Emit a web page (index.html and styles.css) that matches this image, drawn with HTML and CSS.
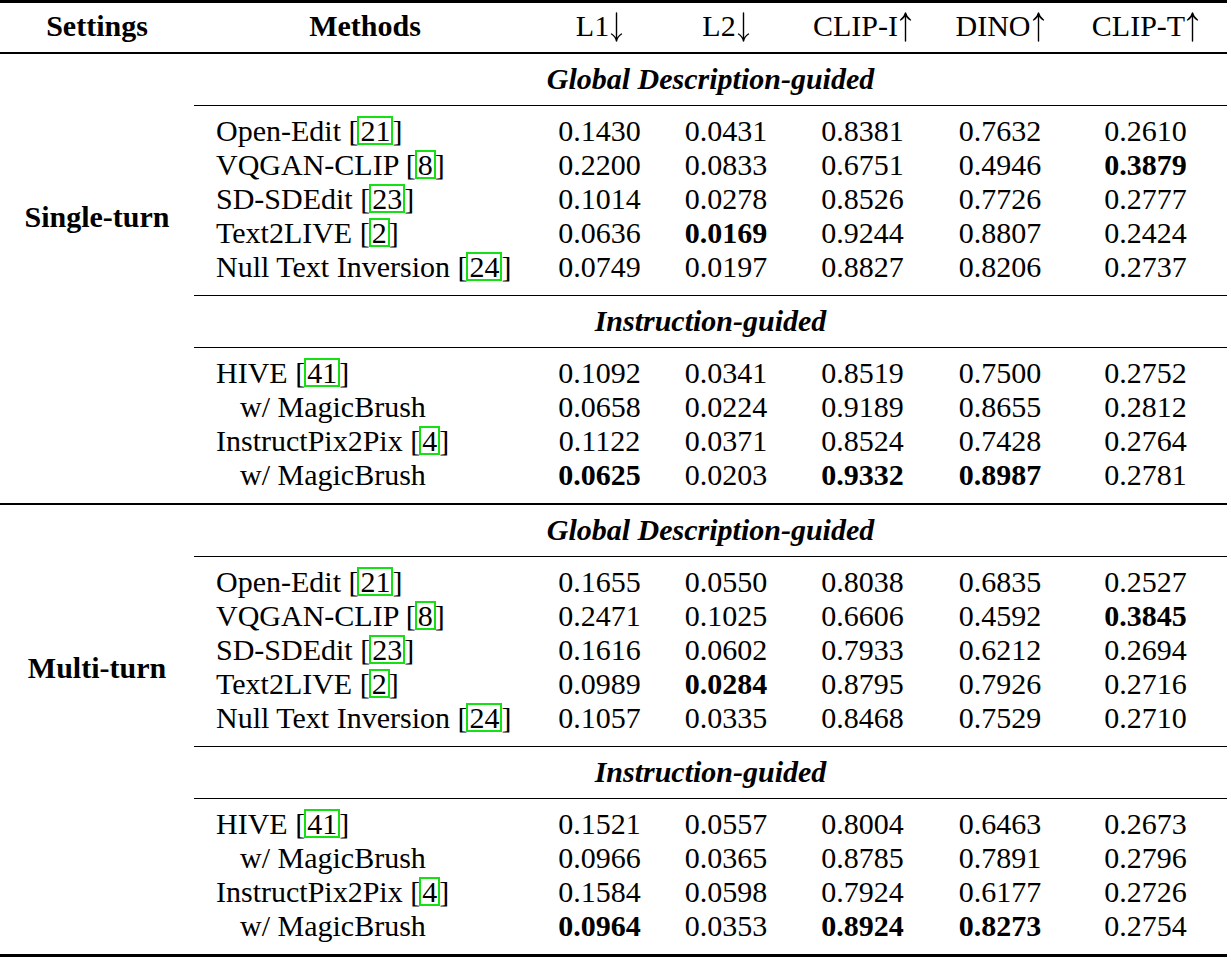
FILE: index.html
```html
<!DOCTYPE html>
<html lang="en">
<head>
<meta charset="utf-8">
<title>Results table</title>
<link rel="stylesheet" href="styles.css">
</head>
<body>
<div class="table">
  <div class="rule rule-thick"></div>
  <div class="head">
    <div class="hc b">Settings</div>
    <div class="hc b">Methods</div>
    <div class="hc">L1<svg class="arr" viewBox="0 0 12 30" aria-label="↓"><path d="M6 1V29M1 22Q5 24.5 6 29Q7 24.5 11 22"/></svg></div>
    <div class="hc">L2<svg class="arr" viewBox="0 0 12 30" aria-label="↓"><path d="M6 1V29M1 22Q5 24.5 6 29Q7 24.5 11 22"/></svg></div>
    <div class="hc">CLIP-I<svg class="arr" viewBox="0 0 12 30" aria-label="↑"><path d="M6 29V1M1 8Q5 5.5 6 1Q7 5.5 11 8"/></svg></div>
    <div class="hc">DINO<svg class="arr" viewBox="0 0 12 30" aria-label="↑"><path d="M6 29V1M1 8Q5 5.5 6 1Q7 5.5 11 8"/></svg></div>
    <div class="hc">CLIP-T<svg class="arr" viewBox="0 0 12 30" aria-label="↑"><path d="M6 29V1M1 8Q5 5.5 6 1Q7 5.5 11 8"/></svg></div>
  </div>
  <div class="rule rule-head"></div>

  <section class="block">
    <div class="setting">Single-turn</div>
    <div class="body">
      <div class="group-title">Global Description-guided</div>
      <div class="rule rule-thin"></div>
      <div class="rows rows-5">
        <div class="row"><div class="m">Open-Edit [<span class="cite">21</span>]</div><div class="n">0.1430</div><div class="n">0.0431</div><div class="n">0.8381</div><div class="n">0.7632</div><div class="n">0.2610</div></div>
        <div class="row"><div class="m">VQGAN-CLIP [<span class="cite">8</span>]</div><div class="n">0.2200</div><div class="n">0.0833</div><div class="n">0.6751</div><div class="n">0.4946</div><div class="n b">0.3879</div></div>
        <div class="row"><div class="m">SD-SDEdit [<span class="cite">23</span>]</div><div class="n">0.1014</div><div class="n">0.0278</div><div class="n">0.8526</div><div class="n">0.7726</div><div class="n">0.2777</div></div>
        <div class="row"><div class="m">Text2LIVE [<span class="cite">2</span>]</div><div class="n">0.0636</div><div class="n b">0.0169</div><div class="n">0.9244</div><div class="n">0.8807</div><div class="n">0.2424</div></div>
        <div class="row"><div class="m">Null Text Inversion [<span class="cite">24</span>]</div><div class="n">0.0749</div><div class="n">0.0197</div><div class="n">0.8827</div><div class="n">0.8206</div><div class="n">0.2737</div></div>
      </div>
      <div class="rule rule-thin"></div>
      <div class="group-title">Instruction-guided</div>
      <div class="rule rule-thin"></div>
      <div class="rows">
        <div class="row"><div class="m">HIVE [<span class="cite">41</span>]</div><div class="n">0.1092</div><div class="n">0.0341</div><div class="n">0.8519</div><div class="n">0.7500</div><div class="n">0.2752</div></div>
        <div class="row"><div class="m ind">w/ MagicBrush</div><div class="n">0.0658</div><div class="n">0.0224</div><div class="n">0.9189</div><div class="n">0.8655</div><div class="n">0.2812</div></div>
        <div class="row"><div class="m">InstructPix2Pix [<span class="cite">4</span>]</div><div class="n">0.1122</div><div class="n">0.0371</div><div class="n">0.8524</div><div class="n">0.7428</div><div class="n">0.2764</div></div>
        <div class="row"><div class="m ind">w/ MagicBrush</div><div class="n b">0.0625</div><div class="n">0.0203</div><div class="n b">0.9332</div><div class="n b">0.8987</div><div class="n">0.2781</div></div>
      </div>
    </div>
  </section>

  <div class="rule rule-mid"></div>

  <section class="block">
    <div class="setting">Multi-turn</div>
    <div class="body">
      <div class="group-title">Global Description-guided</div>
      <div class="rule rule-thin"></div>
      <div class="rows rows-5">
        <div class="row"><div class="m">Open-Edit [<span class="cite">21</span>]</div><div class="n">0.1655</div><div class="n">0.0550</div><div class="n">0.8038</div><div class="n">0.6835</div><div class="n">0.2527</div></div>
        <div class="row"><div class="m">VQGAN-CLIP [<span class="cite">8</span>]</div><div class="n">0.2471</div><div class="n">0.1025</div><div class="n">0.6606</div><div class="n">0.4592</div><div class="n b">0.3845</div></div>
        <div class="row"><div class="m">SD-SDEdit [<span class="cite">23</span>]</div><div class="n">0.1616</div><div class="n">0.0602</div><div class="n">0.7933</div><div class="n">0.6212</div><div class="n">0.2694</div></div>
        <div class="row"><div class="m">Text2LIVE [<span class="cite">2</span>]</div><div class="n">0.0989</div><div class="n b">0.0284</div><div class="n">0.8795</div><div class="n">0.7926</div><div class="n">0.2716</div></div>
        <div class="row"><div class="m">Null Text Inversion [<span class="cite">24</span>]</div><div class="n">0.1057</div><div class="n">0.0335</div><div class="n">0.8468</div><div class="n">0.7529</div><div class="n">0.2710</div></div>
      </div>
      <div class="rule rule-thin"></div>
      <div class="group-title">Instruction-guided</div>
      <div class="rule rule-thin"></div>
      <div class="rows">
        <div class="row"><div class="m">HIVE [<span class="cite">41</span>]</div><div class="n">0.1521</div><div class="n">0.0557</div><div class="n">0.8004</div><div class="n">0.6463</div><div class="n">0.2673</div></div>
        <div class="row"><div class="m ind">w/ MagicBrush</div><div class="n">0.0966</div><div class="n">0.0365</div><div class="n">0.8785</div><div class="n">0.7891</div><div class="n">0.2796</div></div>
        <div class="row"><div class="m">InstructPix2Pix [<span class="cite">4</span>]</div><div class="n">0.1584</div><div class="n">0.0598</div><div class="n">0.7924</div><div class="n">0.6177</div><div class="n">0.2726</div></div>
        <div class="row"><div class="m ind">w/ MagicBrush</div><div class="n b">0.0964</div><div class="n">0.0353</div><div class="n b">0.8924</div><div class="n b">0.8273</div><div class="n">0.2754</div></div>
      </div>
    </div>
  </section>

  <div class="rule rule-thick"></div>
</div>
</body>
</html>
```

FILE: styles.css
```css
html, body {
  margin: 0;
  padding: 0;
  background: #fff;
}

body {
  font-family: "Liberation Serif", "Times New Roman", serif;
  font-size: 30px;
  color: #000;
}

.table {
  width: 1227px;
}

.rule {
  background: #000;
}
.rule-thick { height: 3px; }
.rule-head { height: 2px; }
.rule-mid { height: 2px; }
.rule-thin { height: 1px; }

.b { font-weight: bold; }

.head {
  display: grid;
  grid-template-columns: 194px 342px 127px 126px 147px 128px 163px;
  line-height: 34px;
  padding: 6px 0 9px;
}
.hc { text-align: center; white-space: nowrap; }

.arr {
  display: inline-block;
  width: 13px;
  height: 30px;
  margin-left: 1px;
  vertical-align: -6px;
  fill: none;
  stroke: #000;
  stroke-width: 1.4;
  stroke-linecap: round;
}

.block {
  display: flex;
}

.setting {
  width: 194px;
  flex: none;
  text-align: center;
  font-weight: bold;
  line-height: 34px;
  padding-top: 146px;
}

.body {
  flex: 1;
  display: flex;
  flex-direction: column;
}

.group-title {
  text-align: center;
  font-weight: bold;
  font-style: italic;
  line-height: 34px;
  height: 51px;
  padding-top: 8px;
  box-sizing: border-box;
}

.rows {
  padding: 8px 0 11px;
}

.row {
  display: grid;
  grid-template-columns: 342px 127px 126px 147px 128px 163px;
  line-height: 34px;
}

.m {
  padding-left: 22px;
  white-space: nowrap;
}
.m.ind { padding-left: 46px; }

.n { text-align: center; }

.cite {
  display: inline-block;
  line-height: 25px;
  border: 2px solid #14e014;
  padding: 0 1px;
  margin: 0 -1px;
}
```
